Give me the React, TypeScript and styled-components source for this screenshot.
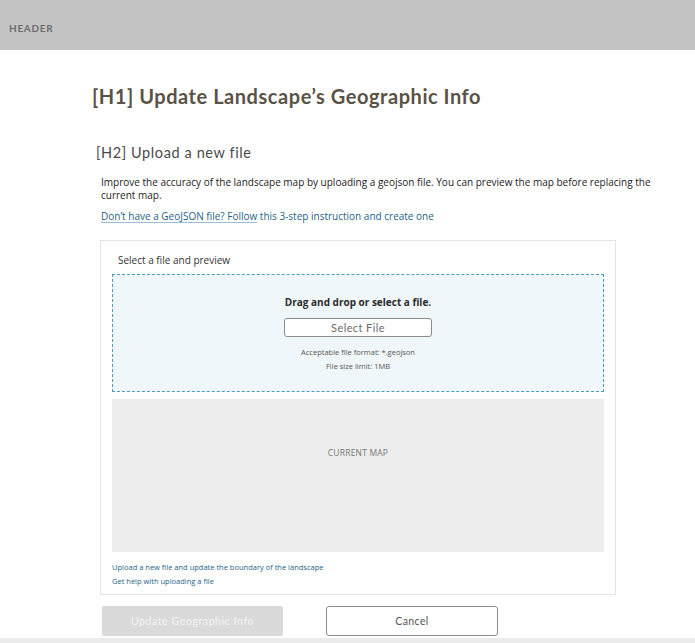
import styled, { createGlobalStyle } from 'styled-components';

const GlobalStyle = createGlobalStyle`
  html, body {
    margin: 0;
    padding: 0;
    background: #ffffff;
    overflow: hidden;
  }

  body {
    font-family: 'Open Sans', 'Liberation Sans', sans-serif;
  }
`;

const Page = styled.div`
  width: 695px;
  height: 643px;
  display: flex;
  flex-direction: column;
`;

const Header = styled.header`
  height: 50px;
  flex-shrink: 0;
  background-color: #c4c4c4;
  display: flex;
  align-items: center;
  padding: 6px 0 0 9px;
  box-sizing: border-box;
  font-family: 'Lato', sans-serif;
  font-size: 10px;
  font-weight: 700;
  color: #6b6b6b;
  letter-spacing: 0.7px;
`;

const Main = styled.main`
  flex: 1;
  padding: 33px 0 0 92px;
  display: flex;
  flex-direction: column;
`;

const Title = styled.h1`
  margin: 0;
  font-family: 'Lato', sans-serif;
  font-size: 20px;
  font-weight: 700;
  color: #5a5247;
  line-height: 26px;
  letter-spacing: 0.55px;
`;

const Section = styled.section`
  margin-top: 34px;
  padding-left: 4px;
`;

const Subtitle = styled.h2`
  margin: 0;
  font-family: 'Lato', sans-serif;
  font-size: 14.5px;
  font-weight: 400;
  color: #4a4a4a;
  line-height: 20px;
  letter-spacing: 0.6px;
`;

const Body = styled.div`
  padding-left: 5px;
  margin-top: 13px;
  width: 560px;
`;

const Paragraph = styled.p`
  margin: 0;
  font-size: 10px;
  line-height: 13px;
  color: #222;
`;

const InlineLink = styled.a<{ $underline?: boolean }>`
  color: #1f5f8b;
  text-decoration: ${(p) => (p.$underline ? 'underline' : 'none')};
  text-decoration-color: #9cc0d6;
  text-underline-offset: 2px;
`;

const LinkLine = styled.p`
  margin: 7px 0 0;
  font-size: 10px;
  line-height: 14px;
`;

const Card = styled.div`
  margin: 17px 0 0 -1px;
  width: 516px;
  height: 355px;
  box-sizing: border-box;
  border: 1px solid #e4e4e4;
  padding: 12px 11px 0 11px;
  display: flex;
  flex-direction: column;
`;

const CardLabel = styled.div`
  padding-left: 6px;
  font-size: 10px;
  line-height: 14px;
  color: #333;
`;

const Dropzone = styled.div`
  margin-top: 7px;
  height: 118px;
  box-sizing: border-box;
  border: 1.5px dashed #4f9cba;
  background-color: #f0f7fb;
  display: flex;
  flex-direction: column;
  align-items: center;
  padding-top: 20px;
`;

const DropTitle = styled.div`
  font-size: 10px;
  font-weight: 700;
  color: #2b2b2b;
  line-height: 14px;
`;

const OutlineButton = styled.button<{ $width: number; $height: number }>`
  width: ${(p) => p.$width}px;
  height: ${(p) => p.$height}px;
  background: #ffffff;
  border: 1px solid #8c8c8c;
  border-radius: 3px;
  font-family: 'Lato', sans-serif;
  font-size: 10.5px;
  color: #555;
  letter-spacing: 0.4px;
  padding: 0;
`;

const DropButton = styled(OutlineButton)`
  margin-top: 9px;
  font-size: 11px;
  color: #6a6a6a;
`;

const Hints = styled.div`
  margin-top: 8px;
  display: flex;
  flex-direction: column;
  align-items: center;
`;

const Hint = styled.div`
  font-size: 7.5px;
  line-height: 14px;
  color: #555;
  text-align: center;
`;

const MapBox = styled.div`
  margin-top: 7px;
  height: 153px;
  background-color: #ededed;
  display: flex;
  justify-content: center;
  padding-top: 48px;
  box-sizing: border-box;
  font-size: 8.5px;
  color: #777;
  letter-spacing: 0.2px;
`;

const SmallLinks = styled.div`
  margin-top: 8px;
  display: flex;
  flex-direction: column;
`;

const SmallLink = styled.a`
  font-size: 7.5px;
  line-height: 14px;
  color: #1f5f8b;
  text-decoration: none;
`;

const Actions = styled.div`
  margin-top: 11px;
  display: flex;
  gap: 43px;
  padding-left: 10px;
`;

const PrimaryButton = styled.button`
  width: 181px;
  height: 30px;
  background-color: #dadada;
  border: none;
  border-radius: 2px;
  font-family: 'Lato', sans-serif;
  font-size: 10.5px;
  color: #f4f4f4;
  letter-spacing: 0.6px;
  padding: 0;
`;

const Footer = styled.div`
  height: 5px;
  background-color: #ececec;
  flex-shrink: 0;
`;

export default function App() {
  return (
    <>
      <GlobalStyle />
      <Page>
        <Header>HEADER</Header>
        <Main>
          <Title>[H1] Update Landscape’s Geographic Info</Title>
          <Section>
            <Subtitle>[H2] Upload a new file</Subtitle>
            <Body>
              <Paragraph>
                Improve the accuracy of the landscape map by uploading a geojson file. You can preview the map before
                replacing the current map.
              </Paragraph>
              <LinkLine>
                <InlineLink $underline>Don’t have a GeoJSON file? Follow</InlineLink>
                <InlineLink> this 3-step instruction and create one</InlineLink>
              </LinkLine>
              <Card>
                <CardLabel>Select a file and preview</CardLabel>
                <Dropzone>
                  <DropTitle>Drag and drop or select a file.</DropTitle>
                  <DropButton $width={148} $height={19}>Select File</DropButton>
                  <Hints>
                    <Hint>Acceptable file format: *.geojson</Hint>
                    <Hint>File size limit: 1MB</Hint>
                  </Hints>
                </Dropzone>
                <MapBox>CURRENT MAP</MapBox>
                <SmallLinks>
                  <SmallLink>Upload a new file and update the boundary of the landscape</SmallLink>
                  <SmallLink>Get help with uploading a file</SmallLink>
                </SmallLinks>
              </Card>
            </Body>
          </Section>
          <Actions>
            <PrimaryButton>Update Geographic Info</PrimaryButton>
            <OutlineButton $width={172} $height={30}>Cancel</OutlineButton>
          </Actions>
        </Main>
        <Footer />
      </Page>
    </>
  );
}
